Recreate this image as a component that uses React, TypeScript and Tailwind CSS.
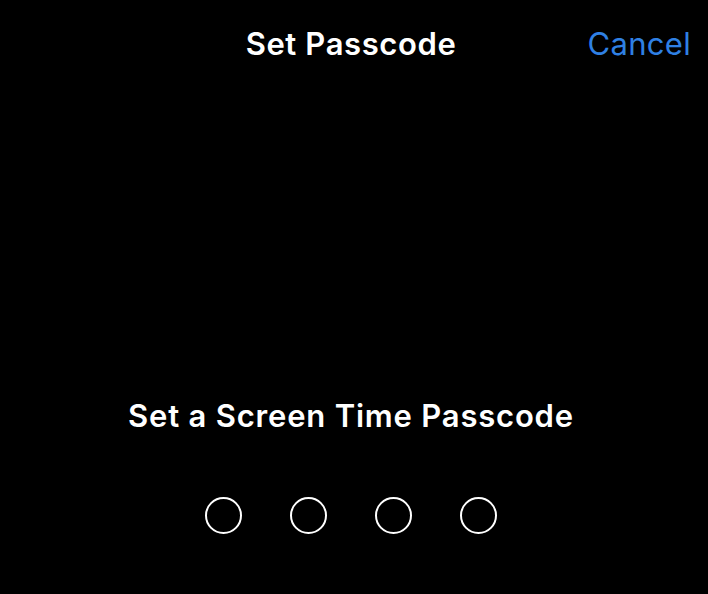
export default function App() {
  const dots = [0, 1, 2, 3];
  return (
    <div
      className="h-[594px] w-full bg-black text-white flex flex-col"
      style={{ fontFamily: 'Inter, "Liberation Sans", sans-serif' }}
    >
      <header className="grid grid-cols-[1fr_auto_1fr] items-center h-[88px] px-[17px]">
        <div />
        <h1 className="text-[31px] font-semibold tracking-[0.6px] -translate-x-[3px]">Set Passcode</h1>
        <div className="flex justify-end">
          <button type="button" className="text-[31px] tracking-[0.3px] text-[#2f80e4]">
            Cancel
          </button>
        </div>
      </header>
      <main className="flex flex-col items-center pt-[305px]">
        <p className="text-[31px] font-semibold tracking-[0.8px] -translate-x-[3px]">Set a Screen Time Passcode</p>
        <div className="flex gap-[48px] mt-[57px] -translate-x-[3px]">
          {dots.map((d) => (
            <span key={d} className="w-[37px] h-[37px] rounded-full border-2 border-white" />
          ))}
        </div>
      </main>
    </div>
  );
}
